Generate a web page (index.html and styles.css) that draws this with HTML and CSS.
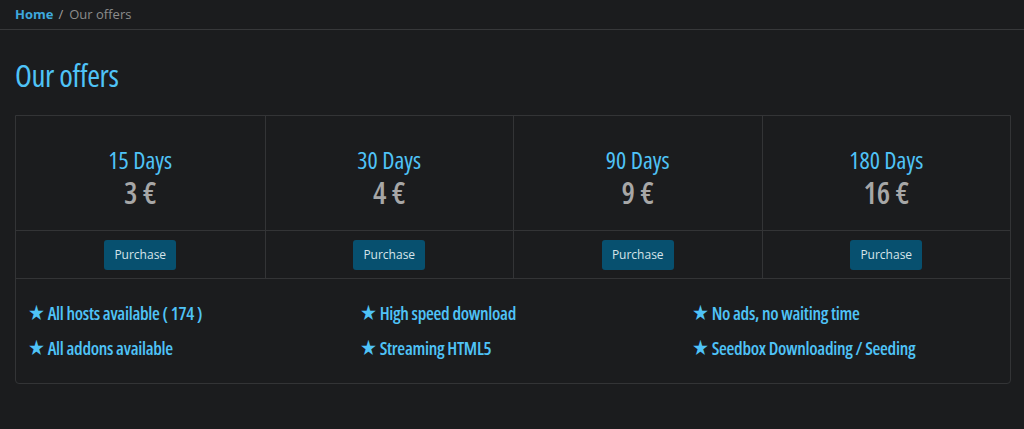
FILE: index.html
```html
<!DOCTYPE html>
<html lang="en">
<head>
    <meta charset="UTF-8">
    <meta name="viewport" content="width=device-width, initial-scale=1.0">
    <title>Our offers</title>
    <link rel="stylesheet" href="styles.css">
</head>
<body>
    <div class="breadcrumb">
        <a href="#" class="crumb-home">Home</a>
        <span class="crumb-sep">/</span>
        <span class="crumb-current">Our offers</span>
    </div>

    <div class="content">
        <h1 class="title">Our offers</h1>

        <div class="offers">
            <div class="plans">
                <div class="plan">
                    <div class="plan-head">
                        <div class="plan-days">15 Days</div>
                        <div class="plan-price">3 €</div>
                    </div>
                    <div class="plan-foot"><button class="btn">Purchase</button></div>
                </div>
                <div class="plan">
                    <div class="plan-head">
                        <div class="plan-days">30 Days</div>
                        <div class="plan-price">4 €</div>
                    </div>
                    <div class="plan-foot"><button class="btn">Purchase</button></div>
                </div>
                <div class="plan">
                    <div class="plan-head">
                        <div class="plan-days">90 Days</div>
                        <div class="plan-price">9 €</div>
                    </div>
                    <div class="plan-foot"><button class="btn">Purchase</button></div>
                </div>
                <div class="plan">
                    <div class="plan-head">
                        <div class="plan-days">180 Days</div>
                        <div class="plan-price">16 €</div>
                    </div>
                    <div class="plan-foot"><button class="btn">Purchase</button></div>
                </div>
            </div>

            <ul class="features">
                <li><span class="star">★</span>All hosts available ( 174 )</li>
                <li><span class="star">★</span>High speed download</li>
                <li><span class="star">★</span>No ads, no waiting time</li>
                <li><span class="star">★</span>All addons available</li>
                <li><span class="star">★</span>Streaming HTML5</li>
                <li><span class="star">★</span>Seedbox Downloading / Seeding</li>
            </ul>
        </div>
    </div>
</body>
</html>
```

FILE: styles.css
```css
body {
    margin: 0;
    background: #1b1c1e;
    font-family: "Open Sans", sans-serif;
    font-stretch: 75%;
    color: #a9a9a9;
}
.breadcrumb {
    height: 30px;
    box-sizing: border-box;
    border-bottom: 1px solid #37383a;
    padding: 0 15px 1px;
    display: flex;
    align-items: center;
    font-stretch: 100%;
    font-size: 13px;
}
.crumb-home {
    color: #3ea8dc;
    font-weight: bold;
    text-decoration: none;
}
.crumb-sep {
    color: #a0a0a0;
    margin: 0 6px 0 5px;
}
.crumb-current {
    color: #8c8c8c;
}
.content {
    padding: 0 13px 0 15px;
}
.title {
    margin: 29px 0 24px;
    font-size: 31px;
    font-weight: 500;
    letter-spacing: -0.4px;
    color: #4fc3f7;
    line-height: 32px;
}
.offers {
    border: 1px solid #333436;
    border-radius: 0 0 4px 4px;
}
.plans {
    display: grid;
    grid-template-columns: repeat(4, 1fr);
    border-bottom: 1px solid #333436;
}
.plan {
    border-left: 1px solid #333436;
}
.plan:first-child {
    border-left: none;
}
.plan-head {
    height: 115px;
    border-bottom: 1px solid #333436;
    text-align: center;
    box-sizing: border-box;
    padding-top: 29px;
}
.plan-days {
    color: #4fc3f7;
    font-size: 24px;
    font-weight: 500;
    line-height: 30px;
}
.plan-price {
    color: #a7a7a7;
    font-size: 30px;
    font-weight: 600;
    line-height: 36px;
}
.plan-foot {
    height: 47px;
    display: flex;
    align-items: center;
    justify-content: center;
}
.btn {
    background: #07506f;
    color: #d6e4ea;
    border: none;
    border-radius: 3px;
    font-family: "Open Sans", sans-serif;
    font-stretch: 100%;
    font-size: 12px;
    width: 72px;
    height: 30px;
    padding: 0;
}
.features {
    list-style: none;
    margin: 0;
    padding: 22px 0 23px 12px;
    display: grid;
    grid-template-columns: repeat(3, 332px);
    row-gap: 11px;
    color: #4fc3f7;
    font-size: 18px;
    font-weight: 600;
    letter-spacing: -0.3px;
    line-height: 24px;
}
.features li {
    display: flex;
    align-items: center;
    gap: 3px;
}
.star {
    font-family: "DejaVu Sans", sans-serif;
    font-size: 21px;
    line-height: 24px;
}
```
